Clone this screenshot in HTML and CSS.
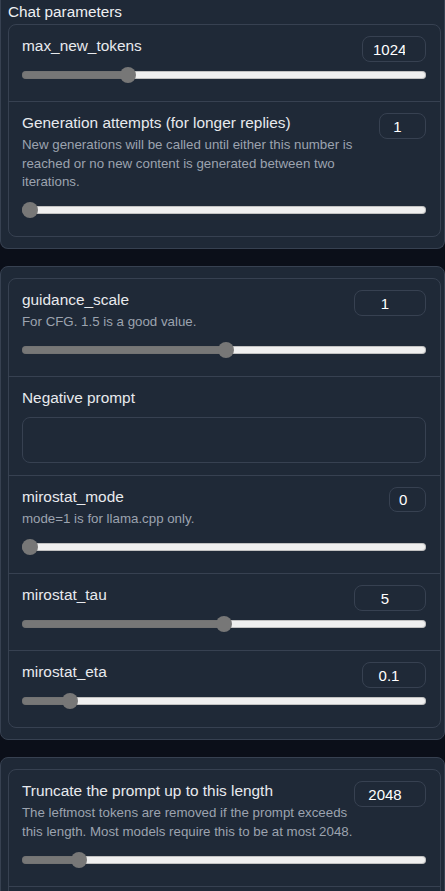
FILE: index.html
```html
<!DOCTYPE html>
<html lang="en">
<head>
<meta charset="utf-8">
<title>Chat parameters</title>
<link rel="stylesheet" href="styles.css">
</head>
<body>
<section class="panel panel--first">
  <div class="panel-title">Chat parameters</div>
  <div class="form">
    <div class="row">
      <div class="row-head">
        <div class="field-text"><div class="label">max_new_tokens</div></div>
        <input class="num num--md" type="text" value="1024" readonly>
      </div>
      <div class="slider" style="--p:0.253"><div class="slider-track"></div><span class="slider-thumb"></span></div>
    </div>
    <div class="row">
      <div class="row-head">
        <div class="field-text">
          <div class="label">Generation attempts (for longer replies)</div>
          <div class="info">New generations will be called until either this number is reached or no new content is generated between two iterations.</div>
        </div>
        <input class="num num--sm" type="text" value="1" readonly>
      </div>
      <div class="slider" style="--p:0"><div class="slider-track"></div><span class="slider-thumb"></span></div>
    </div>
  </div>
</section>

<section class="panel">
  <div class="form">
    <div class="row">
      <div class="row-head">
        <div class="field-text">
          <div class="label">guidance_scale</div>
          <div class="info">For CFG. 1.5 is a good value.</div>
        </div>
        <input class="num num--lg" type="text" value="1" readonly>
      </div>
      <div class="slider" style="--p:0.504"><div class="slider-track"></div><span class="slider-thumb"></span></div>
    </div>
    <div class="row row--text">
      <div class="label label--block">Negative prompt</div>
      <textarea class="textarea" rows="2"></textarea>
    </div>
    <div class="row">
      <div class="row-head">
        <div class="field-text">
          <div class="label">mirostat_mode</div>
          <div class="info">mode=1 is for llama.cpp only.</div>
        </div>
        <input class="num num--xs" type="text" value="0" readonly>
      </div>
      <div class="slider" style="--p:0"><div class="slider-track"></div><span class="slider-thumb"></span></div>
    </div>
    <div class="row">
      <div class="row-head">
        <div class="field-text"><div class="label">mirostat_tau</div></div>
        <input class="num num--lg" type="text" value="5" readonly>
      </div>
      <div class="slider" style="--p:0.5"><div class="slider-track"></div><span class="slider-thumb"></span></div>
    </div>
    <div class="row">
      <div class="row-head">
        <div class="field-text"><div class="label">mirostat_eta</div></div>
        <input class="num num--md" type="text" value="0.1" readonly>
      </div>
      <div class="slider" style="--p:0.103"><div class="slider-track"></div><span class="slider-thumb"></span></div>
    </div>
  </div>
</section>

<section class="panel">
  <div class="form">
    <div class="row">
      <div class="row-head">
        <div class="field-text">
          <div class="label">Truncate the prompt up to this length</div>
          <div class="info">The leftmost tokens are removed if the prompt exceeds this length. Most models require this to be at most 2048.</div>
        </div>
        <input class="num num--lg" type="text" value="2048" readonly>
      </div>
      <div class="slider" style="--p:0.127"><div class="slider-track"></div><span class="slider-thumb"></span></div>
    </div>
    <div class="row"></div>
  </div>
</section>
</body>
</html>
```

FILE: styles.css
```css
html, body {
  margin: 0;
  padding: 0;
}

body {
  background: #0b0f19;
  font-family: "Liberation Sans", Arial, sans-serif;
  color: #e5e7eb;
  overflow: hidden;
}

.panel {
  background: #1f2937;
  border: 1px solid #374151;
  border-radius: 8px;
  padding: 11px 3px 11px 7px;
}

.panel + .panel {
  margin-top: 17px;
}

.panel--first {
  border-top: none;
  border-radius: 0 0 8px 8px;
  padding-top: 2px;
}

.panel-title {
  font-size: 15.3px;
  line-height: 20px;
  color: #eef0f3;
  margin-bottom: 2px;
}

.form {
  border: 1px solid #374151;
  border-radius: 8px;
  overflow: hidden;
}

.row {
  padding: 11px 14px 18px 13px;
}

.row + .row {
  border-top: 1px solid #374151;
}

.row--text {
  padding-bottom: 12px;
}

.row-head {
  display: flex;
  justify-content: space-between;
  align-items: flex-start;
}

.field-text {
  flex: 1;
  min-width: 0;
  max-width: 345px;
  margin-right: -16px;
}

.label {
  font-size: 15.4px;
  line-height: 20px;
  color: #e8eaee;
}

.label--block {
  margin-bottom: 9px;
}

.info {
  font-size: 13.3px;
  line-height: 18.5px;
  color: #9ca3af;
  margin-top: 3px;
  margin-bottom: 5.5px;
}

.num {
  position: relative;
  flex: none;
  box-sizing: border-box;
  height: 26px;
  border: 1px solid #374151;
  border-radius: 8px;
  background: transparent;
  color: #ffffff;
  font-family: "Liberation Sans", Arial, sans-serif;
  font-size: 15px;
  text-align: center;
  padding: 0 20px 0 10px;
  margin: 0;
  outline: none;
}

.num--xs {
  width: 37px;
  height: 25px;
  padding: 0 0 0 9px;
  text-align: left;
}
.num--sm { width: 47px; }
.num--md { width: 64px; }
.num--lg { width: 72px; }

.textarea {
  display: block;
  box-sizing: border-box;
  width: 100%;
  height: 46px;
  margin: 0;
  border: 1px solid #374151;
  border-radius: 8px;
  background: transparent;
  color: #e5e7eb;
  resize: none;
  outline: none;
  font-family: "Liberation Sans", Arial, sans-serif;
  font-size: 14px;
  padding: 8px 10px;
}

.slider {
  position: relative;
  height: 16px;
  margin-top: 5px;
  display: flex;
  align-items: center;
}

.slider-track {
  flex: 1;
  height: 8px;
  border-radius: 4px;
  background: linear-gradient(to right, #777777 0, #777777 calc(8px + (100% - 16px) * var(--p)), #efefef calc(8px + (100% - 16px) * var(--p)), #efefef 100%);
  box-shadow: inset 0 0 0 1px rgba(110, 110, 110, 0.35);
}

.slider-thumb {
  position: absolute;
  top: 0;
  left: calc(8px + (100% - 16px) * var(--p));
  width: 16px;
  height: 16px;
  margin-left: -8px;
  border-radius: 50%;
  background: #777777;
}
```
